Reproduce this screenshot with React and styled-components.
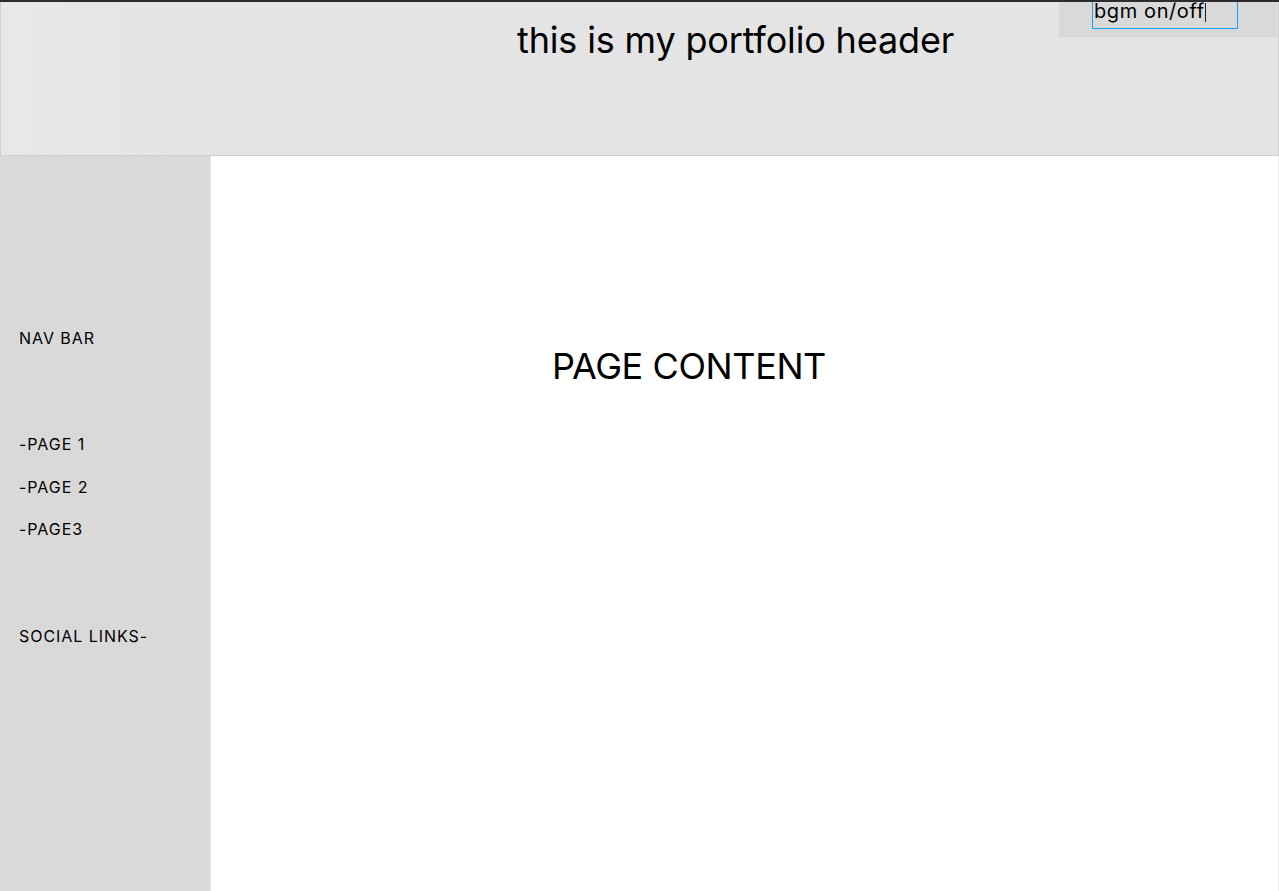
import React from "react";
import styled, { createGlobalStyle } from "styled-components";

const Global = createGlobalStyle`
  html, body { margin: 0; padding: 0; background: #ffffff; }
  body { font-family: Inter, "Noto Sans", "Liberation Sans", sans-serif; color: #000; overflow: hidden; }
  * { box-sizing: border-box; }
`;

const Page = styled.div`
  width: 1279px;
  height: 891px;
  display: flex;
  flex-direction: column;
  border-top: 2px solid #2c2c2c;
`;

const Header = styled.header`
  height: 154px;
  flex: none;
  display: flex;
  align-items: flex-start;
  justify-content: space-between;
  background: linear-gradient(90deg, #e8e8e8 0%, #e4e4e4 15%, #e4e4e4 100%);
  border: 1px solid #cfcfcf;
  border-top: none;
  width: 1279px;
  padding-left: 516px;
`;

const Title = styled.h1`
  margin: 17px 0 0;
  font-size: 36px;
  font-weight: 400;
  line-height: 43px;
  letter-spacing: -0.15px;
  white-space: nowrap;
`;

const BgmBox = styled.div`
  width: 218px;
  height: 35px;
  margin-right: 1px;
  background: #d9d9d9;
  display: flex;
  align-items: flex-end;
  padding-left: 33px;
  padding-bottom: 8px;
  overflow: hidden;
`;

const BgmField = styled.div`
  width: 146px;
  height: 40px;
  flex: none;
  border: 1px solid #18a0fb;
  display: flex;
  align-items: flex-end;
  padding: 0 0 5px 1px;
  font-size: 20px;
  line-height: 24px;
  letter-spacing: 0.6px;
  white-space: nowrap;
`;

const Caret = styled.span`
  display: inline-block;
  width: 1px;
  height: 19px;
  margin-left: 0px;
  margin-bottom: 1px;
  background: #222;
`;

const Body = styled.div`
  flex: 1;
  display: flex;
  min-height: 0;
`;

const Sidebar = styled.nav`
  width: 211px;
  flex: none;
  background: #d9d9d9;
  border-right: 1px solid #e6e6e6;
  padding: 173px 0 0 19px;
  display: flex;
  flex-direction: column;
`;

const NavText = styled.div`
  font-size: 16px;
  line-height: 19px;
  letter-spacing: 0.95px;
  margin-top: ${(p) => p.$gap || 0}px;
`;

const Content = styled.main`
  flex: 1;
  border-right: 1px solid #ececec;
  padding: 189px 0 0 341px;
`;

const ContentTitle = styled.h2`
  margin: 0;
  font-size: 36px;
  font-weight: 400;
  line-height: 43px;
  letter-spacing: -0.4px;
`;

export default function App() {
  return (
    <>
      <Global />
      <Page>
        <Header>
          <Title>this is my portfolio header</Title>
          <BgmBox>
            <BgmField>
              bgm on/off
              <Caret />
            </BgmField>
          </BgmBox>
        </Header>
        <Body>
          <Sidebar>
            <NavText>NAV BAR</NavText>
            <NavText $gap={87}>-PAGE 1</NavText>
            <NavText $gap={24}>-PAGE 2</NavText>
            <NavText $gap={23}>-PAGE3</NavText>
            <NavText $gap={88}>SOCIAL LINKS-</NavText>
          </Sidebar>
          <Content>
            <ContentTitle>PAGE CONTENT</ContentTitle>
          </Content>
        </Body>
      </Page>
    </>
  );
}
